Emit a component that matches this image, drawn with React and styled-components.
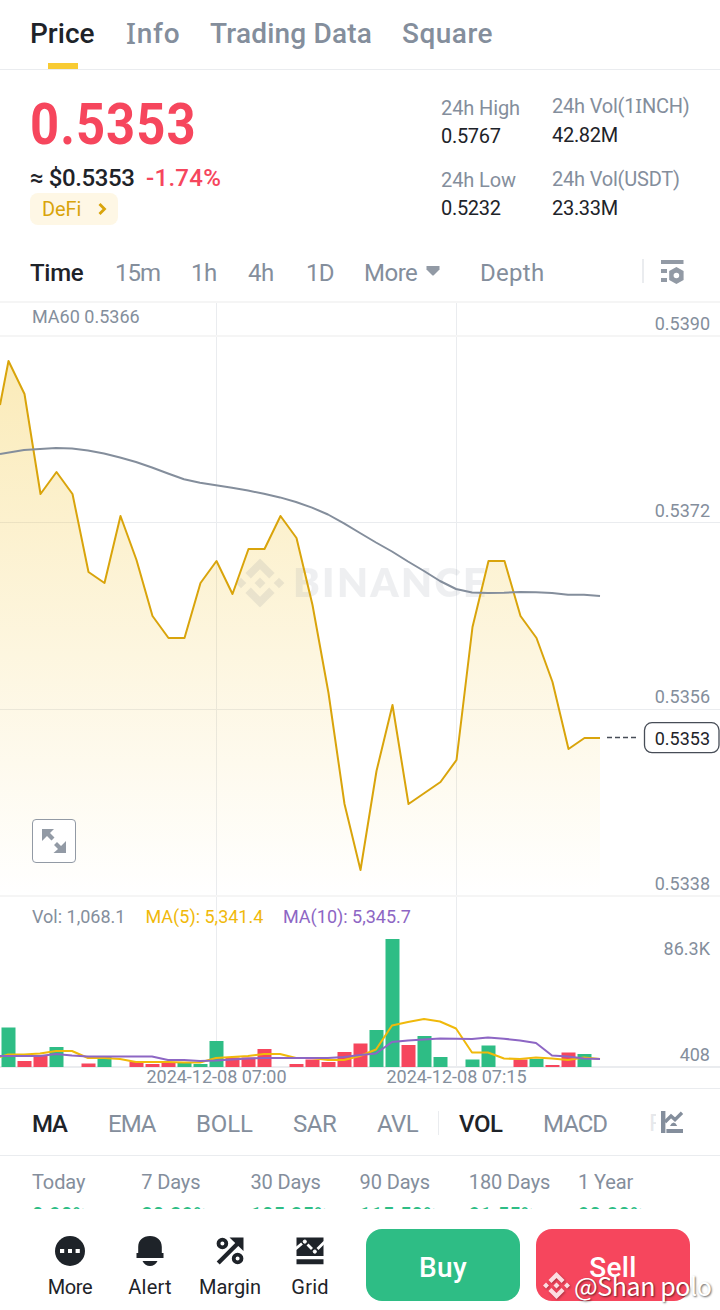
import React, { useState } from 'react';
import styled, { createGlobalStyle } from 'styled-components';

const tabs = [
  { label: 'Price', width: 66 },
  { lead: 'I', label: 'nfo', width: 54, spacing: 0.8 },
  { label: 'Trading Data', width: 162, spacing: 0.2 },
  { label: 'Square', width: 92, spacing: 0.5 },
];

const intervals = [
  { label: 'Time', width: 55, spacing: -0.3 },
  { label: '15m', width: 46, spacing: -1 },
  { label: '1h', width: 27, spacing: -0.6 },
  { label: '4h', width: 28, spacing: -0.4 },
  { label: '1D', width: 28, spacing: -0.8 },
];

const indicators = [
  { label: 'MA', width: 36, active: true, spacing: -1.2 },
  { label: 'EMA', width: 48, spacing: -1 },
  { label: 'BOLL', width: 57, spacing: -0.1 },
  { label: 'SAR', width: 44, spacing: -0.4 },
  { label: 'AVL', width: 41, spacing: -0.6 },
];

const performance = [
  { label: 'Today', value: '0.90%' },
  { label: '7 Days', value: '20.29%' },
  { label: '30 Days', value: '105.25%' },
  { label: '90 Days', value: '115.50%' },
  { label: '180 Days', value: '91.55%' },
  { label: '1 Year', value: '90.80%' },
];

const pricePoints =
  '0,405 8.5,361 24.5,394 40.5,494 56.5,472 72.5,494 88.5,572 104.5,583 120.5,516 136.5,560 152.5,616 168.5,638 184.5,638 200.5,583 216.5,561 232.5,594 248.5,549 264.5,549 280.5,516 296.5,538 312.5,605 328.5,693 344.5,804 360.5,870 376.5,771 392.5,705 408.5,804 424.5,793 440.5,782 456.5,760 472.5,627 488.5,561 504.5,561 520.5,616 536.5,638 552.5,682 568.5,749 584.5,738 600,738';

const ma60Points =
  '0,454 24,450 40,449 56,448 72,448.5 88,450.5 104,453.5 120,457.5 136,462 152,467.5 168,473.5 184,479.2 200,482.7 216,485.2 232,487.8 248,490.6 264,493.8 280,497.4 296,502 312,507.6 328,514.5 344,523.4 360,533 376,542.5 392,551.5 408,561.5 424,571 440,581 456,589 472,592.5 488,593 504,592.7 520,592 536,592.3 552,593 568,594.8 584,594.8 600,596';

const ma5Points =
  '0,1057 8,1054.5 24,1054.5 40,1053.5 56,1051 72,1051 88,1058 104,1058 120,1059 136,1062 168,1062 184,1062.5 200,1062.5 216,1058 232,1057 248,1056 264,1054 280,1054 296,1058 312,1058 328,1060 344,1060 360,1056 376,1049.5 392,1025.5 408,1022 424,1019 440,1021.5 456,1028.5 472,1052.5 488,1052.5 504,1058.5 520,1059 536,1057.5 552,1058.5 568,1060 584,1057.5 600,1059';

const ma10Points =
  '0,1056 40,1056 56,1054 72,1055.5 88,1056.5 152,1056.5 168,1060 184,1060 200,1061 216,1060.5 232,1059.5 248,1058.5 264,1058 328,1058 344,1057 360,1055 376,1053.5 392,1042 408,1040.5 424,1039.5 440,1038.5 472,1039 488,1037.5 504,1038.7 520,1040.5 536,1043 552,1055.5 568,1056.5 584,1058.5 600,1059';

// [center x, top y, rising]
const volumes = [
  [8, 1027.5, 1], [24, 1061, 0], [40, 1055, 0], [56, 1047, 1], [88, 1063.5, 0],
  [104, 1056, 1], [136, 1061.5, 0], [152, 1064, 0], [168, 1062, 0], [184, 1062, 1],
  [200, 1064, 1], [216, 1041, 1], [232, 1057.5, 0], [248, 1057.5, 0], [264, 1049, 0],
  [296, 1064, 0], [312, 1059.5, 0], [328, 1062, 0], [344, 1052, 0], [360, 1043.5, 0],
  [376, 1030, 1], [392, 939, 1], [408, 1045, 0], [424, 1036, 1], [440, 1057, 1],
  [472, 1059.5, 1], [488, 1045.5, 1], [520, 1059.5, 0], [536, 1059, 1], [552, 1065, 0],
  [568, 1052.5, 0], [584, 1054, 1],
];

const BinanceMark = (props) => (
  <svg viewBox="-24.5 -24.5 49 49" fill="currentColor" {...props}>
    <path d="M0-24.5L14.6-10 9.2-4.6 0-13.7-9.2-4.6-14.6-10z" />
    <path d="M0 24.5L14.6 10 9.2 4.6 0 13.7-9.2 4.6-14.6 10z" />
    <path d="M0-5.5L5.5 0 0 5.5-5.5 0zM-19-5.3L-13.7 0-19 5.3-24.5 0zM19-5.3L24.5 0 19 5.3 13.7 0z" />
  </svg>
);

const SettingsIcon = () => (
  <svg width="24" height="26" viewBox="660 258 24 26" fill="#929aa5">
    <path d="M661 260h22.5v4H661zM661 269h6v4h-6zM661 278h6v4h-6z" />
    <path
      fillRule="evenodd"
      d="M676.4 267l7.2 4v9l-7.2 4-7.2-4v-9zM676.4 272.7a2.8 2.8 0 1 0 0 5.6 2.8 2.8 0 0 0 0-5.6z"
    />
  </svg>
);

const IndicatorIcon = () => (
  <svg width="24" height="24" viewBox="660 1110 24 24" fill="#848e9c">
    <path d="M661 1111h4.4v22H661zM666.4 1129h16.6v4h-16.6z" />
    <path d="M665 1122l6-6 4 3.6 7-6.8" fill="none" stroke="#848e9c" strokeWidth="3.4" />
    <path d="M670 1126h7.2l-1.6-2.6-2-1-2 1z" />
  </svg>
);

const MoreIcon = () => (
  <svg width="30" height="30" viewBox="0 0 30 30">
    <circle cx="15" cy="15" r="15" fill="#1e2329" />
    <path d="M5 13h4.2v4H5zM13 13h4v4h-4zM20.6 13h4.2v4h-4.2z" fill="#fff" />
  </svg>
);

const AlertIcon = () => (
  <svg width="30" height="30" viewBox="0 0 30 30" fill="#1e2329">
    <path d="M3.2 11C3.2 4 8 0 15 0s11.8 4 11.8 11v6h1.7v5H1.5v-5h1.7z" />
    <path d="M7.5 25h15c-1.7 3.3-4.2 5-7.5 5s-5.8-1.7-7.5-5z" />
  </svg>
);

const MarginIcon = () => (
  <svg width="30" height="30" viewBox="0 0 30 30">
    <g fill="none" stroke="#1e2329" strokeWidth="3.8">
      <circle cx="7.4" cy="7.5" r="3.9" />
      <circle cx="22.6" cy="22.5" r="3.9" />
      <path d="M3.2 27L23 7.2" strokeWidth="4.2" />
    </g>
    <path d="M14.5 1.5h14V15z" fill="#1e2329" />
  </svg>
);

const GridIcon = () => (
  <svg width="30" height="30" viewBox="0 0 30 30">
    <path d="M1.5 1.5h27V20h-27zM1.5 23.3h27v5h-27z" fill="#1e2329" />
    <g stroke="#fff" fill="#fff">
      <path d="M.5 13L7 7.500M12.500 8.500l4.500 4.500M22.500 13l7-7" strokeWidth="2.8" />
      <circle cx="9.8" cy="5.6" r="1.6" />
      <circle cx="19.8" cy="15.6" r="1.6" />
    </g>
  </svg>
);

const Chart = () => (
  <ChartSvg width="720" height="786" viewBox="0 302 720 786">
    <defs>
      <linearGradient id="area" gradientUnits="userSpaceOnUse" x1="0" y1="336" x2="0" y2="896">
        <stop offset="0" stopColor="#f0b90b" stopOpacity="0.3" />
        <stop offset="1" stopColor="#f0b90b" stopOpacity="0" />
      </linearGradient>
    </defs>

    <g stroke="#eaecef">
      <path d="M216.5 303V1067M456.5 303V1067M0 522.5H720M0 709.5H720" />
      <path d="M0 336H720M0 896H720" stroke="#f5f5f5" strokeWidth="2" />
      <path d="M0 1067H720" strokeWidth="2" />
    </g>

    <polygon points={`${pricePoints} 600,896 0,896`} fill="url(#area)" />
    <g opacity="0.13" color="#707a8a">
      <BinanceMark x="235.5" y="558.5" width="49" height="49" />
      <text x="293" y="597" className="brand" textLength="193">BINANCE</text>
    </g>
    <polyline points={pricePoints} className="line" stroke="#d9a40b" />
    <polyline points={ma60Points} className="line" stroke="#848e9c" />

    {volumes.map(([x, y, up]) => (
      <rect
        key={x}
        x={x - 6.5}
        y={y}
        width="14"
        height={1067 - y}
        fill={up ? '#2ebd85' : '#f6465d'}
      />
    ))}
    <polyline points={ma5Points} className="line" stroke="#f0b90b" />
    <polyline points={ma10Points} className="line" stroke="#8d66c4" />

    <text x="32" y="323">MA60 0.5366</text>
    <g textAnchor="end">
      <text x="710" y="330">0.5390</text>
      <text x="710" y="517">0.5372</text>
      <text x="710" y="703">0.5356</text>
      <text x="710" y="890">0.5338</text>
      <text x="710" y="955">86.3K</text>
      <text x="710" y="1061">408</text>
    </g>
    <text x="32" y="923">Vol: 1,068.1</text>
    <text x="145.5" y="923" fill="#f0b90b">MA(5): 5,341.4</text>
    <text x="283" y="923" fill="#8d66c4">MA(10): 5,345.7</text>
    <g textAnchor="middle">
      <text x="216.5" y="1083">2024-12-08 07:00</text>
      <text x="456.5" y="1083">2024-12-08 07:15</text>
    </g>

    <path d="M607 737.5H636" stroke="#474d57" strokeDasharray="5 3" strokeWidth="1.4" />
    <rect x="644.5" y="722.7" width="74.5" height="30" rx="7.5" fill="#fff" stroke="#474d57" strokeWidth="1.3" />
    <text x="710" y="745" textAnchor="end" fill="#1e2329">0.5353</text>
  </ChartSvg>
);

const App = () => {
  const [tab, setTab] = useState('Price');
  const [interval, setInterval] = useState('Time');

  return (
    <Page>
      <GlobalStyle />
      <Tabs>
        {tabs.map((t) => (
          <Tab
            key={t.label}
            $width={t.width}
            $spacing={t.spacing}
            $active={tab === t.label}
            onClick={() => setTab(t.label)}
          >
            {t.lead && <SlabLetter>{t.lead}</SlabLetter>}
            {t.label}
          </Tab>
        ))}
      </Tabs>

      <Summary>
        <div>
          <LastPrice>0.5353</LastPrice>
          <FiatRow>
            <Fiat>≈ $0.5353</Fiat>
            <Change>-1.74%</Change>
          </FiatRow>
          <Tag>
            DeFi
            <svg width="9" height="12" viewBox="0 0 9 12">
              <path d="M1.5 1l5 5-5 5" fill="none" stroke="#d9a40b" strokeWidth="2.8" />
            </svg>
          </Tag>
        </div>
        <Stats>
          <StatLabel>24h High</StatLabel>
          <StatValue>0.5767</StatValue>
          <StatLabel $spaced>24h Low</StatLabel>
          <StatValue>0.5232</StatValue>
        </Stats>
        <Stats $raised>
          <StatLabel>
            24h Vol(1<SlabLetter>I</SlabLetter>NCH)
          </StatLabel>
          <StatValue>42.82M</StatValue>
          <StatLabel $spaced>24h Vol(USDT)</StatLabel>
          <StatValue>23.33M</StatValue>
        </Stats>
      </Summary>

      <Intervals>
        {intervals.map((i) => (
          <Option
            key={i.label}
            $width={i.width}
            $spacing={i.spacing}
            $active={interval === i.label}
            onClick={() => setInterval(i.label)}
          >
            {i.label}
          </Option>
        ))}
        <Option $width={86} $spacing={-0.5}>
          More
          <svg width="14" height="10" viewBox="0 0 14 10">
            <path d="M.5 0h13v3.5l-6 6h-1l-6-6z" fill="#929aa5" />
          </svg>
        </Option>
        <Option $width={66} $spacing={0.3}>Depth</Option>
        <Tools>
          <SettingsIcon />
        </Tools>
      </Intervals>

      <ChartPanel>
        <Chart />
        <ExpandButton aria-label="Expand chart">
          <svg width="26" height="26" viewBox="41 828 26 26" fill="#929aa5">
            <path d="M42 829h12l-4 4 4.5 4.5-3 3-4.5-4.5-5 5z" />
            <path d="M66 853H53.500l4.500-4-4-4 3-3 4 4 5-5z" />
          </svg>
        </ExpandButton>
      </ChartPanel>

      <Indicators>
        {indicators.map((i) => (
          <Option key={i.label} $width={i.width} $spacing={i.spacing} $active={i.active}>
            {i.label}
          </Option>
        ))}
        <Divider />
        <Option $width={44} $spacing={-0.4} $active>VOL</Option>
        <Option $width={66} $spacing={-1}>MACD</Option>
        <ClippedOption>R</ClippedOption>
        <IndicatorIcon />
      </Indicators>

      <Performance>
        {performance.map((p) => (
          <div key={p.label}>
            <StatLabel>{p.label}</StatLabel>
            <Gain>{p.value}</Gain>
          </div>
        ))}
      </Performance>

      <BottomBar>
        <NavItem $spacing={-0.4}><MoreIcon />More</NavItem>
        <NavItem $spacing={0.2}><AlertIcon />Alert</NavItem>
        <NavItem><MarginIcon />Margin</NavItem>
        <NavItem $spacing={0.2}><GridIcon />Grid</NavItem>
        <TradeButton $color="#2ebd85">Buy</TradeButton>
        <TradeButton $color="#f6465d">Sell</TradeButton>
      </BottomBar>

      <Signature>
        <BinanceMark width="27" height="27" />
        @Shan polo
      </Signature>
    </Page>
  );
};

const GlobalStyle = createGlobalStyle`
  * {
    box-sizing: border-box;
  }

  body {
    margin: 0;
    background: #fff;
  }
`;

const Page = styled.div`
  position: relative;
  width: 720px;
  height: 1310px;
  overflow: hidden;
  background: #fff;
  color: #1e2329;
  font-family: Roboto, 'Liberation Sans', sans-serif;
  font-size: 20px;
  white-space: nowrap;

  svg {
    flex: none;
  }
`;

const Tabs = styled.div`
  display: flex;
  gap: 30px;
  height: 70px;
  padding-left: 30px;
  border-bottom: 1px solid #eaecef;
`;

const Tab = styled.div`
  display: flex;
  align-items: center;
  width: ${(props) => props.$width}px;
  height: 69px;
  padding-bottom: 3px;
  font-size: 28px;
  font-weight: 500;
  letter-spacing: ${(props) => props.$spacing || 0}px;
  color: ${(props) => (props.$active ? '#1e2329' : '#848e9c')};
  background: ${(props) =>
    props.$active
      ? 'linear-gradient(#f8cb33, #f8cb33) 18px 100% / 30px 6px no-repeat'
      : 'none'};
`;

const SlabLetter = styled.span`
  font-family: 'Noto Sans', sans-serif;
  line-height: 1;
`;

const Summary = styled.div`
  display: grid;
  grid-template-columns: 411px 111px 1fr;
  height: 173px;
  padding-left: 30px;
`;

const LastPrice = styled.div`
  width: max-content;
  height: 68px;
  margin-top: 20px;
  font-size: 58px;
  font-weight: 700;
  line-height: 68px;
  letter-spacing: 1.2px;
  color: #f6465d;
  transform: scaleX(0.875);
  transform-origin: left;
`;

const FiatRow = styled.div`
  display: flex;
  gap: 10px;
  height: 35px;
  align-items: center;
  padding-top: 4px;
  font-size: 24px;
  font-weight: 500;
`;

const Fiat = styled.div`
  width: 106px;
  letter-spacing: -0.4px;
`;

const Change = styled.div`
  letter-spacing: 0.3px;
  color: #f6465d;
`;

const Tag = styled.div`
  display: flex;
  align-items: center;
  justify-content: space-between;
  width: 88px;
  height: 32px;
  padding: 0 11px 0 12px;
  border-radius: 8px;
  background: #fef7e5;
  color: #d9a40b;
  letter-spacing: -0.1px;
`;

const StatLabel = styled.div`
  height: 28px;
  margin-top: ${(props) => (props.$spaced ? 16 : 0)}px;
  line-height: 28px;
  letter-spacing: -0.1px;
  color: #848e9c;
`;

const StatValue = styled.div`
  height: 28px;
  line-height: 29px;
  letter-spacing: -0.3px;
`;

const Stats = styled.div`
  padding-top: ${(props) => (props.$raised ? 22 : 24)}px;

  ${StatLabel} {
    margin-bottom: ${(props) => (props.$raised ? 1 : 0)}px;
    letter-spacing: ${(props) => (props.$raised ? -0.2 : -0.1)}px;
  }
`;

const Intervals = styled.div`
  display: flex;
  align-items: center;
  gap: 30px;
  height: 60px;
  padding: 0 36px 0 30px;
  border-bottom: 2px solid #f5f5f5;
`;

const Option = styled.div`
  display: flex;
  align-items: center;
  gap: 10px;
  width: ${(props) => props.$width}px;
  padding-top: 2px;
  font-size: 24px;
  letter-spacing: ${(props) => props.$spacing || 0}px;
  font-weight: ${(props) => (props.$active ? 500 : 400)};
  color: ${(props) => (props.$active ? '#1e2329' : '#848e9c')};

  svg {
    margin: -4px 0 0 -1px;
  }
`;

const Tools = styled.div`
  display: flex;
  align-items: center;
  height: 24px;
  margin: -2px 0 0 auto;
  padding-left: 16px;
  border-left: 2px solid #eaecef;
`;

const ChartPanel = styled.div`
  position: relative;
  height: 787px;
  margin-top: -1px;
  border-bottom: 1px solid #eaecef;
`;

const ChartSvg = styled.svg`
  display: block;

  text {
    font-size: 18px;
  }

  text:not([fill]) {
    fill: #848e9c;
  }

  .brand {
    font-family: Lato, sans-serif;
    font-size: 40px;
    font-weight: 800;
    fill: currentColor;
  }

  .line {
    fill: none;
    stroke-width: 2;
    stroke-linejoin: round;
  }
`;

const ExpandButton = styled.button`
  position: absolute;
  left: 32px;
  top: 517px;
  display: flex;
  align-items: center;
  justify-content: center;
  width: 44px;
  height: 44px;
  padding: 0;
  border: 1px solid #929aa5;
  border-radius: 4px;
  background: #fff;
`;

const Indicators = styled.div`
  display: flex;
  align-items: center;
  gap: 40px;
  height: 67px;
  padding: 1px 0 0 32px;
  border-bottom: 1px solid #eaecef;

  > svg {
    margin: -1px 0 0 -36px;
  }
`;

const Divider = styled.div`
  width: 1px;
  height: 24px;
  margin: 0 -20px;
  background: #eaecef;
`;

const ClippedOption = styled.div`
  width: 7px;
  overflow: hidden;
  font-size: 24px;
  color: #e6e8eb;
`;

const Performance = styled.div`
  display: grid;
  grid-template-columns: repeat(6, 109.2px);
  height: 53px;
  padding: 12px 0 0 32px;
  overflow: hidden;
`;

const Gain = styled.div`
  margin-top: 5px;
  line-height: 28px;
  font-weight: 500;
  letter-spacing: 0.2px;
  color: #2ebd85;
`;

const BottomBar = styled.div`
  display: flex;
  height: 101px;
  padding: 20px 30px 0;
  background: #fff;
`;

const NavItem = styled.div`
  display: flex;
  flex-direction: column;
  align-items: center;
  gap: 9px;
  width: 80px;
  padding-top: 7px;
  line-height: 24px;
  letter-spacing: ${(props) => props.$spacing || 0}px;
`;

const TradeButton = styled.button`
  width: 154px;
  height: 72px;
  margin-left: 16px;
  padding: 4px 0 0;
  border: 0;
  border-radius: 16px;
  background: ${(props) => props.$color};
  color: #fff;
  font: 500 28px Roboto, sans-serif;
  letter-spacing: 0.3px;
`;

const Signature = styled.div`
  position: absolute;
  left: 543px;
  top: 1267px;
  display: flex;
  align-items: center;
  gap: 4px;
  height: 36px;
  font-family: 'Noto Sans CJK SC', sans-serif;
  font-size: 25px;
  letter-spacing: -0.4px;
  color: #fff;
  text-shadow: 1px 1px 2px rgba(0, 0, 0, 0.6);

  svg {
    color: #fcdde1;
    filter: drop-shadow(1px 1px 1px rgba(0, 0, 0, 0.3));
  }
`;

export default App;
